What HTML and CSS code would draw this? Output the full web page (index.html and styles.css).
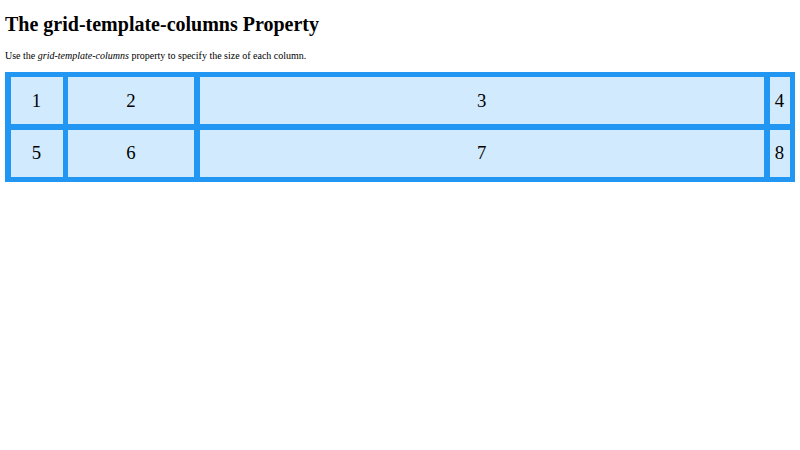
FILE: index.html
```html
<!DOCTYPE html>
<html lang="en">
<head>
    <meta charset="UTF-8">
    <meta name="viewport" content="width=device-width, initial-scale=1.0">
    <title>The grid-template-columns Property</title>
    <link rel="stylesheet" href="styles.css">
</head>
<body>
    <h1>The grid-template-columns Property</h1>
    <p>Use the <em>grid-template-columns</em> property to specify the size of each column.</p>

    <div class="grid-container">
        <div>1</div>
        <div>2</div>
        <div>3</div>
        <div>4</div>
        <div>5</div>
        <div>6</div>
        <div>7</div>
        <div>8</div>
    </div>
</body>
</html>
```

FILE: styles.css
```css
body {
    font-family: "Liberation Serif", "Times New Roman", serif;
    margin: 0 5px 5px;
    color: #000;
}
h1 {
    font-size: 20px;
    margin: 13px 0;
}
p {
    font-size: 10px;
    margin: 14px 0 10.5px;
}
.grid-container {
    display: grid;
    grid-template-columns: 52px 126px auto 20px;
    gap: 5.5px;
    background-color: #2196F3;
    padding: 5.5px;
}
.grid-container > div {
    background-color: rgba(255, 255, 255, 0.8);
    text-align: center;
    padding: 12.5px 0;
    font-size: 18.75px;
}
```
